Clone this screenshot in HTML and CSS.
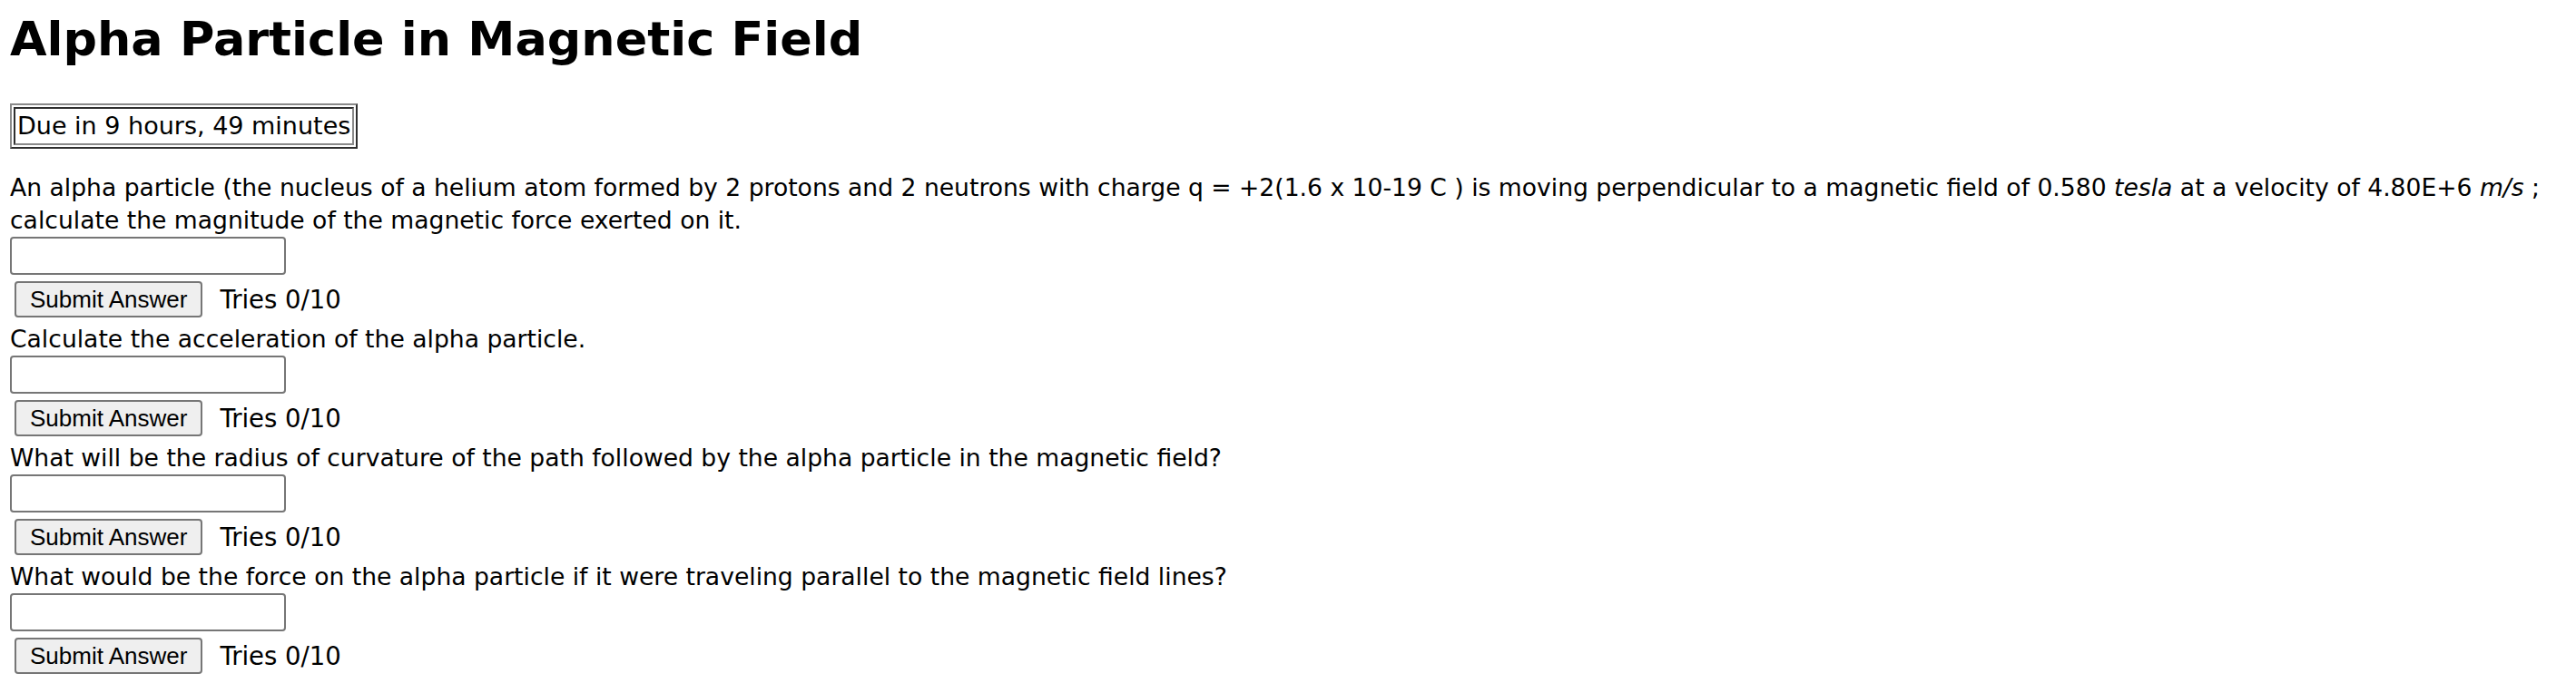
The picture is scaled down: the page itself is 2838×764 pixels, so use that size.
FILE: index.html
```html
<!DOCTYPE html>
<html>
<head>
<meta charset="utf-8">
<title>Alpha Particle in Magnetic Field</title>
<link rel="stylesheet" href="styles.css">
</head>
<body>
<h1 class="title">Alpha Particle in Magnetic Field</h1>
<table class="due"><tr><td class="due-cell">Due in 9 hours, 49 minutes</td></tr></table>
<div class="problem">
  <p class="question">An alpha particle (the nucleus of a helium atom formed by 2 protons and 2 neutrons with charge q = +2(1.6 x 10-19 C ) is moving perpendicular to a magnetic field of 0.580 <i>tesla</i> at a velocity of 4.80E+6 <i>m/s</i> ; calculate the magnitude of the magnetic force exerted on it.</p>
  <input class="answer" type="text">
  <div class="submit-row"><button class="submit">Submit Answer</button><span class="tries">Tries 0/10</span></div>

  <p class="question">Calculate the acceleration of the alpha particle.</p>
  <input class="answer" type="text">
  <div class="submit-row"><button class="submit">Submit Answer</button><span class="tries">Tries 0/10</span></div>

  <p class="question">What will be the radius of curvature of the path followed by the alpha particle in the magnetic field?</p>
  <input class="answer" type="text">
  <div class="submit-row"><button class="submit">Submit Answer</button><span class="tries">Tries 0/10</span></div>

  <p class="question">What would be the force on the alpha particle if it were traveling parallel to the magnetic field lines?</p>
  <input class="answer" type="text">
  <div class="submit-row"><button class="submit">Submit Answer</button><span class="tries">Tries 0/10</span></div>
</div>
</body>
</html>
```
FILE: styles.css
```css
html, body {
  background: #ffffff;
}
body {
  margin: 0;
  padding: 9px 11px;
  font-family: "DejaVu Sans", Verdana, sans-serif;
  font-size: 26.6px;
  line-height: 36px;
  color: #000000;
}
.title {
  margin: 0 0 38px 0;
  font-family: "DejaVu Sans", Verdana, sans-serif;
  font-weight: bold;
  font-size: 52.4px;
  line-height: 67px;
}
.due {
  border-collapse: separate;
  border-spacing: 2px;
  border-style: solid;
  border-width: 2px;
  border-color: #8a8a8a #2e2e2e #2e2e2e #8a8a8a;
  margin: 0 0 25px 0;
}
.due-cell {
  border-style: solid;
  border-width: 2px;
  border-color: #2e2e2e #8a8a8a #8a8a8a #2e2e2e;
  padding: 2px 2px;
  font-size: 27px;
  line-height: 34px;
}
.problem {
  display: flex;
  flex-direction: column;
  align-items: flex-start;
}
.question {
  margin: 0;
}
.answer {
  box-sizing: border-box;
  width: 304px;
  height: 42px;
  margin: 0 0 7px 0;
  padding: 0 6px;
  border: 2px solid #767676;
  border-radius: 4px;
  background: #ffffff;
  font-family: "Liberation Sans", Arial, sans-serif;
  font-size: 24px;
}
.submit-row {
  display: flex;
  align-items: center;
  margin: 0 0 6px 5px;
  height: 40px;
}
.submit {
  box-sizing: border-box;
  height: 40px;
  padding: 0 15px;
  border: 2px solid #767676;
  border-radius: 4px;
  background: #efefef;
  color: #000000;
  font-family: "Liberation Sans", Arial, sans-serif;
  font-size: 26px;
}
.tries {
  margin-left: 19px;
  font-size: 27.5px;
}
```
